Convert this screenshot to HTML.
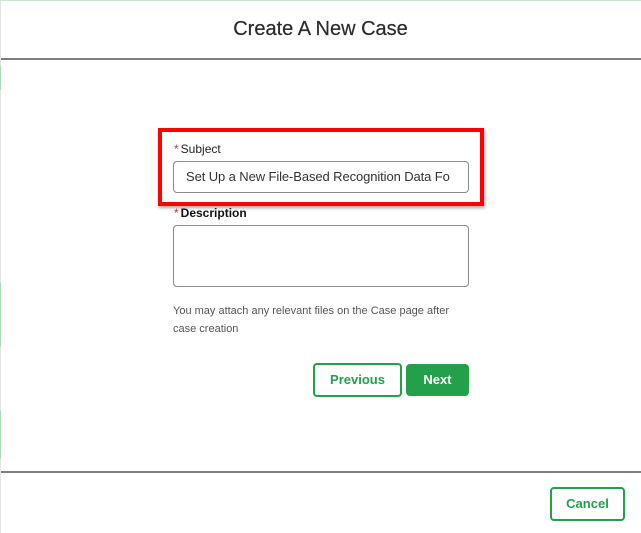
<!DOCTYPE html>
<html><head><meta charset="utf-8"><style>
html,body{margin:0;padding:0;background:#fff;width:641px;height:533px;overflow:hidden;font-family:"Liberation Sans",sans-serif;position:relative}
.abs{position:absolute}
.title{left:0;width:641px;top:18px;text-align:center;font-size:20px;color:#2b2b2b;-webkit-text-stroke:0.2px #2b2b2b}
.hr{left:1px;width:640px;height:2px;background:#7f7f7f}
.lbl{font-size:12px;color:#222}
.req{color:#c23934;margin-right:2px}
.inp{border:1px solid #8c8c8c;border-radius:4px;background:#fff;box-sizing:border-box}
.btn{box-sizing:border-box;border-radius:4px;font-size:13px;font-weight:bold;text-align:center}
</style></head><body>
<div class="abs" style="left:0;top:0;width:1px;height:533px;background:#e4e4e4"></div>
<div class="abs" style="left:0;top:66px;width:1px;height:24px;background:#a8dcae"></div>
<div class="abs" style="left:0;top:283px;width:1px;height:64px;background:#a8dcae"></div>
<div class="abs" style="left:0;top:411px;width:1px;height:48px;background:#a8dcae"></div>
<div class="abs" style="left:0;top:0;width:641px;height:1px;background:#c8e8cc"></div>
<div class="abs title">Create A New Case</div>
<div class="abs hr" style="top:58px"></div>
<div class="abs hr" style="top:471px"></div>
<div class="abs" style="left:158px;top:128px;width:326px;height:78px;box-sizing:border-box;border:4px solid #f00;box-shadow:1px 2px 3px rgba(0,0,0,.35)"></div>
<div class="abs lbl" style="left:174px;top:142px"><span class="req">*</span>Subject</div>
<div class="abs inp" style="left:173px;top:161px;width:296px;height:32px;font-size:13px;color:#333;line-height:30px;padding-left:12px;white-space:nowrap;overflow:hidden"><span style="display:inline-block;transform:scaleX(1.0);letter-spacing:-0.1px">Set Up a New File-Based Recognition Data Fo</span></div>
<div class="abs lbl" style="left:174px;top:206px;font-weight:bold;color:#111"><span class="req" style="font-weight:normal">*</span>Description</div>
<div class="abs inp" style="left:173px;top:225px;width:296px;height:62px"></div>
<div class="abs" style="left:173px;top:302px;font-size:11px;color:#555;line-height:18px;width:300px">You may attach any relevant files on the Case page after<br>case creation</div>
<div class="abs btn" style="left:313px;top:363px;width:89px;height:34px;border:2px solid #22a14a;color:#22a14a;line-height:30px">Previous</div>
<div class="abs btn" style="left:406px;top:364px;width:63px;height:32px;background:#22a14a;color:#fff;line-height:32px">Next</div>
<div class="abs btn" style="left:550px;top:487px;width:75px;height:34px;border:2px solid #22a14a;color:#22a14a;line-height:30px">Cancel</div>
</body></html>
